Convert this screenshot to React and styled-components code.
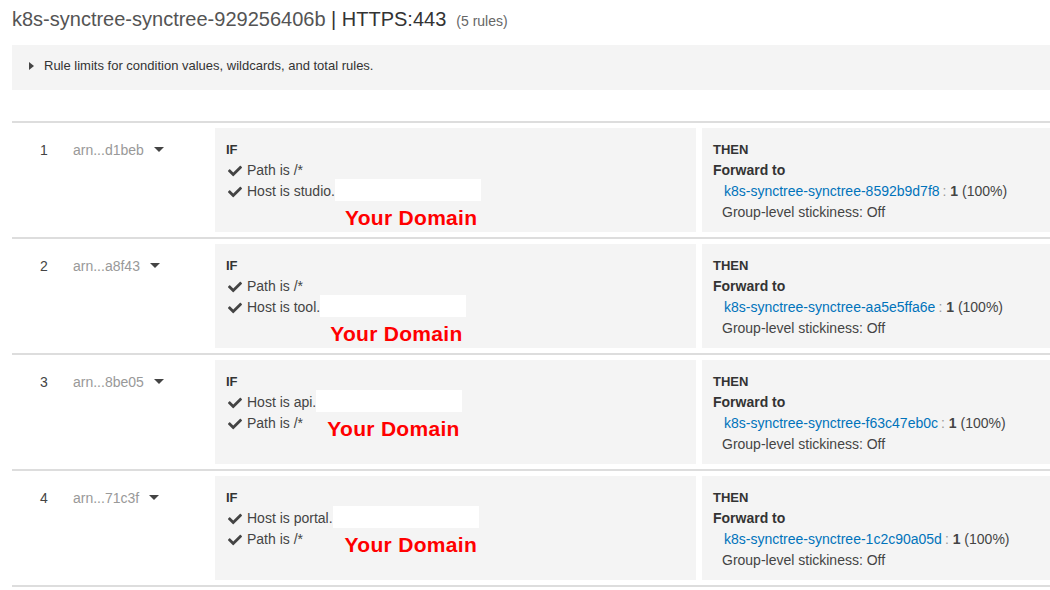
import styled, { createGlobalStyle } from 'styled-components';
import { FaCheck } from 'react-icons/fa';

const GlobalStyle = createGlobalStyle`
  body {
    margin: 0;
    background: #fff;
    overflow: hidden;
    font-family: "Liberation Sans", Arial, sans-serif;
  }
`;

const Page = styled.div`
  width: 1050px;
  padding: 7px 0 0 12px;
`;

const Title = styled.h1`
  margin: 0;
  height: 24px;
  font-size: 20px;
  line-height: 24px;
  font-weight: normal;
  color: #545454;
  white-space: nowrap;
`;

const TitleStrong = styled.span`
  color: #333;
`;

const RuleCount = styled.span`
  margin-left: 10px;
  font-size: 14px;
  line-height: 1;
  color: #666;
`;

const InfoBox = styled.div`
  margin-top: 14px;
  background: #f4f4f4;
  padding: 11px 0 14px 17px;
  display: flex;
  align-items: center;
  font-size: 13px;
  line-height: 20px;
  color: #333;
`;

const RightTriangle = styled.span`
  width: 0;
  height: 0;
  border-top: 4px solid transparent;
  border-bottom: 4px solid transparent;
  border-left: 5px solid #444;
  margin-right: 10px;
`;

const Table = styled.div`
  margin-top: 31px;
  border-top: 2px solid #ddd;
`;

const Row = styled.div`
  display: grid;
  grid-template-columns: 197px 481px 1fr;
  column-gap: 6px;
  padding: 5px 0;
  border-bottom: 2px solid #ddd;
`;

const RuleCell = styled.div`
  display: flex;
  align-items: center;
  height: 21px;
  margin-top: 11px;
  font-size: 14px;
  white-space: nowrap;
`;

const RuleNumber = styled.span`
  width: 33px;
  padding-left: 28px;
  color: #444;
`;

const Arn = styled.span`
  color: #999;
`;

const DownCaret = styled.span`
  width: 0;
  height: 0;
  margin-left: 10px;
  border-left: 5px solid transparent;
  border-right: 5px solid transparent;
  border-top: 5px solid #444;
`;

const Panel = styled.div`
  height: 104px;
  box-sizing: border-box;
  background: #f4f4f4;
  padding: 11px 0 0 ${(p) => p.$indent}px;
  font-size: 14px;
  line-height: 21px;
  color: #444;
`;

const Heading = styled.div`
  font-size: 13px;
  font-weight: bold;
  color: #333;
`;

const Condition = styled.div`
  display: flex;
  align-items: center;
  white-space: nowrap;
  svg {
    margin: 0 5px 0 2px;
    color: #444;
  }
`;

const Redacted = styled.span`
  position: relative;
  display: inline-block;
  vertical-align: top;
  width: 146px;
  height: 22px;
  margin-top: -3px;
  background: #fff;
`;

const DomainNote = styled.span`
  position: absolute;
  left: ${(p) => p.$left}px;
  top: 27px;
  font-size: 21px;
  line-height: 24px;
  font-weight: bold;
  letter-spacing: 0.3px;
  color: #ff0000;
  white-space: nowrap;
`;

const ForwardLabel = styled.div`
  font-weight: bold;
  color: #333;
`;

const TargetLine = styled.div`
  padding-left: ${(p) => p.$indent}px;
  white-space: nowrap;
`;

const TargetLink = styled.a`
  color: #0073bb;
  text-decoration: none;
`;

const Colon = styled.span`
  color: #999;
  margin-left: 3px;
`;

const rules = [
  { arn: 'arn...d1beb', host: 'studio.', hostFirst: false, noteLeft: 10, target: 'k8s-synctree-synctree-8592b9d7f8' },
  { arn: 'arn...a8f43', host: 'tool.', hostFirst: false, noteLeft: 10, target: 'k8s-synctree-synctree-aa5e5ffa6e' },
  { arn: 'arn...8be05', host: 'api.', hostFirst: true, noteLeft: 11, target: 'k8s-synctree-synctree-f63c47eb0c' },
  { arn: 'arn...71c3f', host: 'portal.', hostFirst: true, noteLeft: 12, target: 'k8s-synctree-synctree-1c2c90a05d' },
];

const PathCondition = () => (
  <Condition>
    <FaCheck size={14} />
    Path is /*
  </Condition>
);

const HostCondition = ({ host, noteLeft }) => (
  <Condition>
    <FaCheck size={14} />
    Host is {host}
    <Redacted>
      <DomainNote $left={noteLeft}>Your Domain</DomainNote>
    </Redacted>
  </Condition>
);

const App = () => {
  return (
    <Page>
      <GlobalStyle />
      <Title>
        k8s-synctree-synctree-929256406b <TitleStrong>| HTTPS:443</TitleStrong>
        <RuleCount>(5 rules)</RuleCount>
      </Title>
      <InfoBox>
        <RightTriangle />
        Rule limits for condition values, wildcards, and total rules.
      </InfoBox>
      <Table>
        {rules.map((rule, i) => (
          <Row key={rule.arn}>
            <RuleCell>
              <RuleNumber>{i + 1}</RuleNumber>
              <Arn>{rule.arn}</Arn>
              <DownCaret />
            </RuleCell>
            <Panel $indent={11}>
              <Heading>IF</Heading>
              {rule.hostFirst ? (
                <>
                  <HostCondition host={rule.host} noteLeft={rule.noteLeft} />
                  <PathCondition />
                </>
              ) : (
                <>
                  <PathCondition />
                  <HostCondition host={rule.host} noteLeft={rule.noteLeft} />
                </>
              )}
            </Panel>
            <Panel $indent={11}>
              <Heading>THEN</Heading>
              <ForwardLabel>Forward to</ForwardLabel>
              <TargetLine $indent={11}>
                <TargetLink href="#">{rule.target}</TargetLink>
                <Colon>:</Colon> <b>1</b> (100%)
              </TargetLine>
              <TargetLine $indent={9}>Group-level stickiness: Off</TargetLine>
            </Panel>
          </Row>
        ))}
      </Table>
    </Page>
  );
};

export default App;
